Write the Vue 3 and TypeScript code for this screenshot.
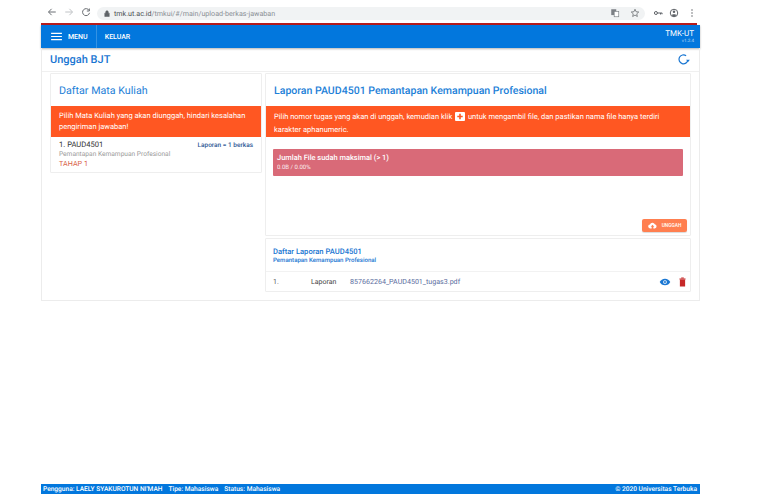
<script setup lang="ts">
const address = { host: 'tmk.ut.ac.id', path: '/tmkui/#/main/upload-berkas-jawaban' }
</script>

<template>
  <div class="screen">
    <div class="browser">
      <div class="nav">
        <svg class="ic" viewBox="0 0 12 12"><path d="M10.500 6H2M5.500 2.200 1.800 6l3.700 3.800" fill="none" stroke="#6b6f74" stroke-width="1.200"/></svg>
        <svg class="ic" viewBox="0 0 12 12"><path d="M1.500 6H10M6.500 2.200 10.200 6 6.500 9.800" fill="none" stroke="#c0c3c6" stroke-width="1.200"/></svg>
        <svg class="ic" viewBox="0 0 12 12"><path d="M9.800 4.200A4.200 4.200 0 1 0 10.200 7M10 1.800v3H7" fill="none" stroke="#6b6f74" stroke-width="1.200"/></svg>
      </div>
      <div class="omnibox">
        <svg class="lock" viewBox="0 0 8 9"><path d="M1 4h6v4.500H1zM2.300 4V2.500a1.700 1.700 0 0 1 3.400 0V4" fill="#5f6368" stroke="#5f6368" stroke-width=".7"/></svg>
        <span class="url"><b>{{ address.host }}</b>{{ address.path }}</span>
        <span class="spacer"></span>
        <svg class="ic" viewBox="0 0 12 12"><rect x="1.500" y="1.500" width="6" height="7" fill="#7c8085"/><rect x="5" y="4" width="5.500" height="6.500" fill="#fff" stroke="#7c8085" stroke-width=".8"/></svg>
        <svg class="ic star" viewBox="0 0 12 12"><path d="m6 1.500 1.300 3 3.200.3L8.100 7l.7 3.200L6 8.500l-2.800 1.700L3.900 7 1.500 4.800l3.200-.3z" fill="none" stroke="#5f6368" stroke-width=".9"/></svg>
      </div>
      <div class="tools">
        <svg class="ic" viewBox="0 0 12 12"><circle cx="3.500" cy="6" r="1.800" fill="none" stroke="#5f6368" stroke-width="1.200"/><path d="M5 6h6M9 6v1.800M10.800 6v1.500" stroke="#5f6368" stroke-width="1.200"/></svg>
        <svg class="ic" viewBox="0 0 12 12"><circle cx="6" cy="6" r="4.500" fill="none" stroke="#5f6368" stroke-width="1.200"/><circle cx="6" cy="4.600" r="1.500" fill="#5f6368"/><path d="M3 8.600c1-1.500 5-1.500 6 0L6 10.500z" fill="#5f6368"/></svg>
        <svg class="ic dots" viewBox="0 0 4 12"><circle cx="2" cy="2.500" r=".9" fill="#5f6368"/><circle cx="2" cy="6" r=".9" fill="#5f6368"/><circle cx="2" cy="9.500" r=".9" fill="#5f6368"/></svg>
      </div>
    </div>
    <div class="redline"></div>

    <header class="toolbar">
      <button class="menu">
        <svg class="burger" viewBox="0 0 14 10"><path d="M1 1.500h12M1 5h12M1 8.500h12" stroke="#fff" stroke-width="1.300"/></svg>
        MENU
      </button>
      <button class="logout">KELUAR</button>
      <div class="brand">
        <div class="brand-name">TMK-UT</div>
        <div class="brand-ver">v1.2.4</div>
      </div>
    </header>

    <main class="page">
      <div class="page-head">
        <h1>Unggah BJT</h1>
        <svg class="refresh" viewBox="0 0 14 14"><path d="M11.700 7.500A4.800 4.800 0 1 1 9.800 3" fill="none" stroke="#1976d2" stroke-width="1.300"/><path d="M9.800 7.200h4L11.800 10z" fill="#1976d2"/></svg>
      </div>

      <div class="cols">
        <section class="card left">
          <h2 class="title-left">Daftar Mata Kuliah</h2>
          <div class="banner">Pilih Mata Kuliah yang akan diunggah, hindari kesalahan pengiriman jawaban!</div>
          <div class="course">
            <div class="course-row">
              <span class="course-code">1. PAUD4501</span>
              <span class="course-count">Laporan = 1 berkas</span>
            </div>
            <div class="course-name">Pemantapan Kemampuan Profesional</div>
            <div class="course-stage">TAHAP 1</div>
          </div>
        </section>

        <div class="right">
          <section class="card upload">
            <h2 class="title-right">Laporan PAUD4501 Pemantapan Kemampuan Profesional</h2>
            <div class="banner">Pilih nomor tugas yang akan di unggah, kemudian klik <svg class="plus" viewBox="0 0 10 9"><rect width="10" height="9" rx="1" fill="#fff"/><path d="M5 1.800v5.400M2.300 4.500h5.400" stroke="#ff5722" stroke-width="1.600"/></svg> untuk mengambil file, dan pastikan nama file hanya terdiri karakter aphanumeric.</div>
            <div class="limit">
              <div class="limit-title">Jumlah File sudah maksimal (&gt; 1)</div>
              <div class="limit-sub">0.0B / 0.00%</div>
            </div>
            <div class="actions">
              <button class="send">
                <svg class="cloud" viewBox="0 0 14 10"><path d="M3.500 9.500a3 3 0 0 1-.4-6A4 4 0 0 1 10.600 3a3.300 3.300 0 0 1 0 6.500H8.300V6.800h1.500L7 4 4.200 6.800h1.500v2.700z" fill="#fff"/></svg>
                UNGGAH
              </button>
            </div>
          </section>

          <section class="card files">
            <div class="files-head">
              <div class="files-title">Daftar Laporan PAUD4501</div>
              <div class="files-sub">Pemantapan Kemampuan Profesional</div>
            </div>
            <div class="file-row">
              <span class="file-no">1.</span>
              <span class="file-type">Laporan</span>
              <span class="file-name">857662264_PAUD4501_tugas3.pdf</span>
              <svg class="eye" viewBox="0 0 14 10"><path d="M7 .8C4 .8 1.500 2.600.4 5c1.100 2.400 3.600 4.200 6.600 4.200s5.500-1.800 6.600-4.200C12.500 2.600 10 .8 7 .8z" fill="#1976d2"/><circle cx="7" cy="5" r="2.300" fill="#fff"/><circle cx="7" cy="5" r="1.300" fill="#1976d2"/></svg>
              <svg class="trash" viewBox="0 0 8 11"><path d="M.5 1.500h7v1H.5zM2.500.3h3v1h-3zM1 3h6v7.700H1z" fill="#c62828"/></svg>
            </div>
          </section>
        </div>
      </div>
    </main>

    <div class="gap"></div>

    <footer class="footer">
      <span class="who"><span>Pengguna: LAELY SYAKUROTUN NI'MAH</span><span>Tipe: Mahasiswa</span><span>Status: Mahasiswa</span></span>
      <span>© 2020 Universitas Terbuka</span>
    </footer>
  </div>
</template>

<style scoped>
.screen {
  width: 768px;
  height: 501px;
  background: #fff;
  font-family: Roboto, "Liberation Sans", sans-serif;
  text-rendering: geometricPrecision;
  overflow: hidden;
  display: flex;
  flex-direction: column;
  color: #444;
}
.browser {
  height: 23px;
  display: flex;
  align-items: center;
  padding: 0 71px 0 47px;
  flex: none;
}
.ic { width: 10px; height: 10px; flex: none; }
.nav { display: flex; gap: 7px; align-items: center; width: 50px; }
.omnibox {
  width: 548px;
  height: 13px;
  margin-top: 3px;
  background: #f1f3f4;
  border-radius: 7px;
  display: flex;
  align-items: center;
  padding: 0 5px 0 7px;
  gap: 4px;
  box-sizing: border-box;
  flex: none;
}
.lock { width: 6px; height: 7px; flex: none; }
.url { font-size: 7.150px; color: #8a8f94; white-space: nowrap; }
.url b { font-weight: 400; color: #4a4e52; }
.spacer { flex: 1; }
.star { margin-left: 6px; }
.tools { display: flex; align-items: center; gap: 6px; margin-left: 8px; margin-top: 3px; }
.dots { width: 4px; margin-left: 5px; }
.redline { height: 2px; margin: 0 71px 0 41px; background: #b71c1c; flex: none; }
.toolbar {
  height: 23px;
  margin: 0 68px 0 41px;
  background: #0277dd;
  display: flex;
  align-items: stretch;
  color: #fff;
  flex: none;
  box-shadow: 0 1px 2px rgba(0, 0, 0, .3);
}
button { font-family: inherit; border: 0; background: none; color: inherit; padding: 0; }
.menu {
  width: 56px;
  display: flex;
  align-items: center;
  gap: 5px;
  padding-left: 9px;
  font-size: 7px;
  font-weight: 500;
  border-right: 1px solid rgba(255, 255, 255, .2);
}
.burger { width: 13px; height: 9px; }
.logout { width: 44px; padding-right: 3px; font-size: 7px; font-weight: 500; }
.brand { margin-left: auto; padding: 4px 6px 0 0; text-align: right; }
.brand-name { font-size: 8px; line-height: 10px; }
.brand-ver { font-size: 4.500px; line-height: 6px; opacity: .7; }
.page {
  height: 253px;
  margin: 0 68px 0 41px;
  border: 1px solid #ececec;
  border-top: 0;
  box-sizing: border-box;
  display: flex;
  flex-direction: column;
  flex: none;
}
.page-head {
  height: 24px;
  padding: 0 9px 0 8px;
  display: flex;
  align-items: center;
  justify-content: space-between;
  border-bottom: 1px solid #f0f0f0;
  box-sizing: border-box;
}
h1 { margin: 0; font-size: 11px; font-weight: 500; color: #1976d2; }
.refresh { width: 13px; height: 13px; }
.cols { display: flex; gap: 3px; padding: 1px 8px 0 8px; align-items: flex-start; }
.card {
  background: #fff;
  border: 1px solid #eeeeee;
  border-radius: 1px;
  box-sizing: border-box;
}
h2 {
  margin: 0;
  height: 32px;
  line-height: 34px;
  font-weight: 400;
  color: #1e81d8;
  padding-left: 8px;
  white-space: nowrap;
}
.title-left { font-size: 10.700px; }
.title-right { font-size: 10.550px; font-weight: 500; }
.left { width: 212px; height: 100px; }
.banner {
  background: #ff5722;
  color: #fff;
  font-size: 7.500px;
  line-height: 11px;
  padding: 4px 8px 3px;
  height: 31px;
  box-sizing: border-box;
}
.course { padding: 3px 8px 0 8px; }
.course-row { display: flex; justify-content: space-between; align-items: center; }
.course-code { font-size: 7.600px; color: #333; }
.course-count { font-size: 6.500px; font-weight: 500; color: #2f5a96; }
.course-name { font-size: 6.600px; color: #999; line-height: 9px; margin-top: 1px; }
.course-stage { font-size: 7.200px; color: #d9634a; line-height: 10px; }
.right { width: 426px; display: flex; flex-direction: column; gap: 2px; }
.upload { height: 163px; }
.upload .banner { line-height: 13px; padding: 4px 8px 2px; }
.plus { width: 10px; height: 9px; vertical-align: -1.500px; margin: 0 1px; }
.limit {
  margin: 12px 7px 0;
  height: 27px;
  background: #d96a78;
  color: #fff;
  padding: 4px 4px;
  box-sizing: border-box;
  border-radius: 1px;
}
.limit-title { font-size: 7.450px; font-weight: 500; line-height: 10px; }
.limit-sub { font-size: 6px; line-height: 9px; opacity: .9; }
.actions { display: flex; justify-content: flex-end; margin: 43px 3px 0 0; }
.send {
  width: 45px;
  height: 13px;
  background: #ff7f50;
  color: #fff;
  border-radius: 2px;
  font-size: 4.800px;
  font-weight: 500;
  display: flex;
  align-items: center;
  justify-content: center;
  gap: 5px;
  box-shadow: 0 1px 1px rgba(0, 0, 0, .15);
}
.cloud { width: 9px; height: 7px; }
.files { height: 54px; }
.files-head { height: 33px; padding: 8px 7px 0; box-sizing: border-box; border-bottom: 1px solid #f2f2f2; }
.files-title { font-size: 7.600px; font-weight: 500; color: #1976d2; line-height: 10px; }
.files-sub { font-size: 6.100px; font-weight: 500; color: #1976d2; line-height: 7px; }
.file-row { display: flex; align-items: center; height: 19px; padding: 0 4px 0 7px; font-size: 7px; }
.file-no { width: 38px; color: #555; }
.file-type { width: 39px; color: #444; }
.file-name { flex: 1; color: #5a6c9e; font-size: 7.100px; }
.eye { width: 12px; height: 8px; }
.trash { width: 7px; height: 10px; margin-left: 8px; }
.gap { height: 183px; flex: none; }
.footer {
  height: 10px;
  margin: 0 68px 0 41px;
  background: #0277dd;
  color: #fff;
  font-size: 6.600px;
  font-weight: 500;
  line-height: 10px;
  display: flex;
  justify-content: space-between;
  padding: 0 3px 0 2px;
  flex: none;
}
.who { display: flex; gap: 6px; }
</style>
